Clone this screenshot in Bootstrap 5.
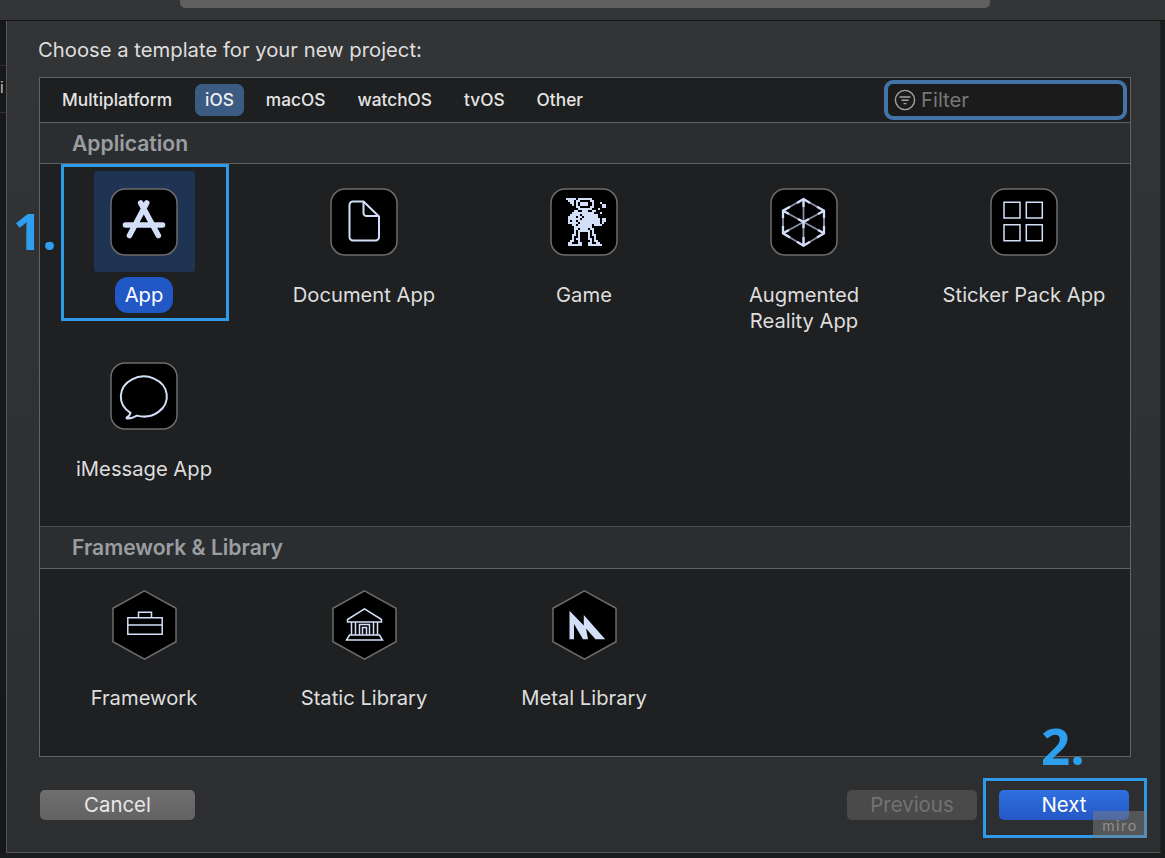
<!doctype html>
<html lang="en">
<head>
<meta charset="utf-8">
<title>Choose a template</title>
<link href="https://cdn.jsdelivr.net/npm/bootstrap@5.3.0/dist/css/bootstrap.min.css" rel="stylesheet">
<style>
html,body{height:858px;overflow:hidden}
body{background:#1b1c1e;font-family:Inter,"Liberation Sans",sans-serif;color:#dcdcdc;position:relative;width:1165px}
.top-strip{height:20px;background:#343537;padding-left:180px}
.top-pill{width:810px;height:8px;background:#5f5f60;border-radius:0 0 5px 5px}
.top-rule{height:1px;background:#141414}
.main-row{height:832px}
.side-sliver{width:6px;background:#17181a;overflow:hidden;color:#c4c4c4;font-size:15px;line-height:18px;padding-top:44px}
.side-sliver span{display:block;border-top:1px solid #333;border-bottom:1px solid #333;height:48px;padding-top:13px}
.sheet-panel{width:1155px;background:linear-gradient(#333436,#2d2e30);border:1px solid #555;border-top:0;border-right-color:#222;padding:0 0 0 32px}
.sheet-title{font-size:20.25px;line-height:24px;padding-top:17px;margin-bottom:15px;color:#dedede;margin-left:-1px;white-space:nowrap}
.tpl-box{width:1092px;height:680px;border:1px solid #626364;background:#1f2022}
.tab-bar{height:45px;background:#1e1f20;border-bottom:1px solid #606162;padding:6px 3px 0 12px}
.tab-item{font-size:17.3px;line-height:32px;height:32px;padding:0 10px;margin-right:12px;color:#e4e4e4;border-radius:7px;font-weight:500}
.tab-item:first-child{margin-right:13px}
.tab-on{background:#3b5b82;color:#f0f0f0}
.filter-box{width:243px;height:40px;margin-top:-4px;border:4px solid #4274a8;border-radius:9px;background:#1b1b1c;color:#787878;font-size:20.3px;padding-left:6px}
.filter-box span{margin-left:1px;padding-top:1px}
.group-head{height:41px;background:#2b2e31;border-bottom:1px solid #606162;color:#9b9ea1;font-weight:600;font-size:21.1px;line-height:42px;padding-left:32px}
.group-head.lined{border-top:1px solid #4d4e50;height:43px}
.app-body{height:362px;padding-top:7px;gap:0 10px;margin-left:-1px}
.lib-body{height:187px;padding-top:5px;gap:0 10px;margin-left:-1px}
.tpl-cell{width:210px;height:174px;color:#dedede;font-size:20.2px;line-height:26px;text-align:center}
.tpl-thumb{width:101px;height:101px;border-radius:3px;margin-bottom:10px}
.thumb-on{background:#1f3352}
.tile{width:68px;height:68px;display:block}
.hex{width:65px;height:70px;display:block}
.lbl-on{background:#2257c6;color:#fff;border-radius:13px;padding:5px 10px;margin-top:-5px;display:inline-block}
.foot-row{padding:33px 2px 0 1px;width:1092px}
.mac-btn{width:155px;height:30px;border:0;border-radius:5px;font-size:20.4px;line-height:30px;padding:0;color:#e8e8e8;font-family:inherit}
.mac-cancel{background:linear-gradient(#6f6f6f,#626262)}
.mac-cancel:hover,.mac-cancel:disabled{background:linear-gradient(#6f6f6f,#626262);color:#e8e8e8}
.mac-prev,.mac-prev:disabled{width:130px;background:#4a4a4b;color:#737373;opacity:1;margin-right:22px}
.mac-next,.mac-next:hover{width:130px;background:linear-gradient(#2f70e0,#2457c5);color:#fff}
.mark-box{position:absolute;border:3px solid #2f9be8;pointer-events:none}
.mark-one{left:61px;top:164px;width:168px;height:157px}
.mark-two{left:983px;top:778px;width:164px;height:60px}
.mark-num{position:absolute;font-family:"Open Sans",sans-serif;font-weight:700;font-size:51px;line-height:50px;color:#2e9fee}
.num-one{left:13px;top:205px}
.num-two{left:1041px;top:720px}
.miro-tag{position:absolute;left:1093px;top:811px;width:54px;height:27px;background:rgba(125,125,125,.5);color:#8e8e8e;font-family:Lato,sans-serif;font-size:15px;line-height:28px;text-align:center;letter-spacing:1.5px}
.ink{fill:none;stroke:#d3dff8;stroke-width:2}
.ink-thin{fill:none;stroke:#d3dff8;stroke-width:1.5}
.tile-bg{fill:#000;stroke:#6c6c6c;stroke-width:1.5}
.ink-fill{fill:#d3dff8}
</style>
</head>
<body>
<div class="top-strip"><div class="top-pill"></div></div>
<div class="top-rule"></div>
<div class="main-row d-flex">
  <div class="side-sliver"><span>i</span></div>
  <div class="sheet-panel">
    <div class="sheet-title">Choose a template for your new project:</div>
    <div class="tpl-box d-flex flex-column">
      <div class="tab-bar d-flex">
        <div class="tab-item">Multiplatform</div>
        <div class="tab-item tab-on">iOS</div>
        <div class="tab-item">macOS</div>
        <div class="tab-item">watchOS</div>
        <div class="tab-item">tvOS</div>
        <div class="tab-item">Other</div>
        <div class="filter-box d-flex align-items-center gap-1 ms-auto">
          <svg width="22" height="22" viewBox="0 0 22 22" fill="none" stroke="#a3a3a3" stroke-width="1.4"><circle cx="11" cy="11" r="9.6"/><path d="M5.5 8h11M7.5 11.3h7M9.5 14.6h3"/></svg>
          <span>Filter</span>
        </div>
      </div>
      <div class="group-head">Application</div>
      <div class="app-body d-flex flex-wrap align-content-start">
        <div class="tpl-cell d-flex flex-column align-items-center">
          <div class="tpl-thumb thumb-on d-flex align-items-center justify-content-center">
            <svg class="tile" viewBox="0 0 68 68"><rect class="tile-bg" x="1" y="1" width="66" height="66" rx="14"/><path d="M36.7 15 19.500 47.500M30.700 15l17.600 32.500M15.500 37h37" fill="none" stroke="#d3dff8" stroke-width="5.600" stroke-linecap="round"/></svg>
          </div>
          <div class="lbl-on">App</div>
        </div>
        <div class="tpl-cell d-flex flex-column align-items-center">
          <div class="tpl-thumb d-flex align-items-center justify-content-center">
            <svg class="tile" viewBox="0 0 68 68"><rect class="tile-bg" x="1" y="1" width="66" height="66" rx="14"/><path class="ink" d="M23 13.500h10.500L49 28.500V49a3.500 3.500 0 0 1-3.500 3.500H23a3.500 3.500 0 0 1-3.500-3.500V17a3.500 3.500 0 0 1 3.500-3.500z"/><path class="ink" d="M33.500 13.500V25a3 3 0 0 0 3 3H49"/></svg>
          </div>
          <div>Document App</div>
        </div>
        <div class="tpl-cell d-flex flex-column align-items-center">
          <div class="tpl-thumb d-flex align-items-center justify-content-center">
            <svg class="tile" viewBox="0 0 68 68"><rect class="tile-bg" x="1" y="1" width="66" height="66" rx="14"/><path id="gamePixels" d="" fill="none" stroke="#d3dff8" stroke-width="2" shape-rendering="crispEdges"/></svg>
          </div>
          <div>Game</div>
        </div>
        <div class="tpl-cell d-flex flex-column align-items-center">
          <div class="tpl-thumb d-flex align-items-center justify-content-center">
            <svg class="tile" viewBox="0 0 68 68"><rect class="tile-bg" x="1" y="1" width="66" height="66" rx="14"/>
              <path d="M33.500 11 54 22.700V45.300L33.500 57.700 13 45.300V22.700ZM33.500 11V57.700M13 22.700 54 45.300M54 22.700 13 45.300" fill="none" stroke="#8a8fa0" stroke-width="1.800"/>
              <path d="M33.500 19V11M27 15 33.500 11 40 15M47 18.700 54 22.700V30M20 18.700 13 22.700V30M47 49.500 54 45.300V38M20 49.500 13 45.300V38M33.500 49V57.700M27 53.700 33.500 57.700 40 53.700M28 31 33.500 34 39 31M33.500 34V40M13 22.700 19 26M54 22.700 48 26M13 45.300 19 42M54 45.300 48 42" fill="none" stroke="#d3dff8" stroke-width="2.300"/></svg>
          </div>
          <div>Augmented<br>Reality App</div>
        </div>
        <div class="tpl-cell d-flex flex-column align-items-center">
          <div class="tpl-thumb d-flex align-items-center justify-content-center">
            <svg class="tile" viewBox="0 0 68 68"><rect class="tile-bg" x="1" y="1" width="66" height="66" rx="14"/><path class="ink-thin" d="M14 14.300h16V30H14zM36.300 14.300h16V30h-16zM14 36.700h16v16H14zM36.300 36.700h16v16h-16z"/></svg>
          </div>
          <div>Sticker Pack App</div>
        </div>
        <div class="tpl-cell d-flex flex-column align-items-center">
          <div class="tpl-thumb d-flex align-items-center justify-content-center">
            <svg class="tile" viewBox="0 0 68 68"><rect class="tile-bg" x="1" y="1" width="66" height="66" rx="14"/><path class="ink" d="M27 53.600A23 20 0 1 0 20.500 50.800C20 53 18.500 54.800 16.600 55.500 16 56.300 17 56.700 18 56.500 21.500 56.200 24.500 55 27 53.600Z"/></svg>
          </div>
          <div>iMessage App</div>
        </div>
      </div>
      <div class="group-head lined">Framework &amp; Library</div>
      <div class="lib-body d-flex">
        <div class="tpl-cell d-flex flex-column align-items-center">
          <div class="tpl-thumb d-flex align-items-center justify-content-center">
            <svg class="hex" viewBox="0 0 65 70"><path class="tile-bg" d="M32.500.8 64 18.300V51.700L32.500 69.200 1 51.700V18.300Z"/><path class="ink-thin" d="M15.800 27.700h34.400v16.600H15.800zM15.800 35h34.400M26.500 27.700v-5.500h13v5.500"/></svg>
          </div>
          <div>Framework</div>
        </div>
        <div class="tpl-cell d-flex flex-column align-items-center">
          <div class="tpl-thumb d-flex align-items-center justify-content-center">
            <svg class="hex" viewBox="0 0 65 70"><path class="tile-bg" d="M32.500.8 64 18.300V51.700L32.500 69.200 1 51.700V18.300Z"/><path class="ink-thin" d="M32.500 18.800 15.500 29.500V32h34V29.500ZM19.500 32V45M23.500 32V45M41.500 32V45M45.500 32V45M27.500 45V34.500h10V45M30.500 45V37.500h4V45M17.500 45h30L50.500 50h-36Z"/></svg>
          </div>
          <div>Static Library</div>
        </div>
        <div class="tpl-cell d-flex flex-column align-items-center">
          <div class="tpl-thumb d-flex align-items-center justify-content-center">
            <svg class="hex" viewBox="0 0 65 70"><path class="tile-bg" d="M32.500.8 64 18.300V51.700L32.500 69.200 1 51.700V18.300Z"/><path class="ink-fill" d="M17.500 20.700 31.800 35.500V25L53.200 49.300H43.500L34 38.500 36 49.300H31L22 34V49.300H17.500Z"/></svg>
          </div>
          <div>Metal Library</div>
        </div>
      </div>
    </div>
    <div class="foot-row d-flex">
      <button type="button" class="btn mac-btn mac-cancel me-auto">Cancel</button>
      <button type="button" class="btn mac-btn mac-prev" disabled>Previous</button>
      <button type="button" class="btn mac-btn mac-next">Next</button>
    </div>
  </div>
</div>
<div class="mark-box mark-one"></div>
<div class="mark-box mark-two"></div>
<div class="mark-num num-one">1.</div>
<div class="mark-num num-two">2.</div>
<div class="miro-tag">miro</div>
<script>
var rows=["#####.#######.......",".###.##.....##......","..##.#.####..#...#..","...#.#.####..#....##",".....##.....##....##","......#######...#...","....##..###..##.....","...###########...#..","..#####.########....",".####.##.#######....",".######.#########.##",".#.##.###########.##",".#####.##########.#.","...##.#######.####..","....#########.......","....##.####.##......","....#.######.#......","....#.#....#.#......","...##.#....#.##.....","...#..#....#..#.....","...#.##....##.#.....","..##..#.....#.##....",".##...##...##..##...",".#######...#######.."];
var d="";rows.forEach(function(r,y){r.replace(/#+/g,function(m,i){d+="M"+(16+2*i)+" "+(11+2*y)+"h"+(2*m.length);return m;});});
document.getElementById("gamePixels").setAttribute("d",d);
</script>
<script src="https://cdn.jsdelivr.net/npm/bootstrap@5.3.0/dist/js/bootstrap.bundle.min.js"></script>
</body>
</html>
